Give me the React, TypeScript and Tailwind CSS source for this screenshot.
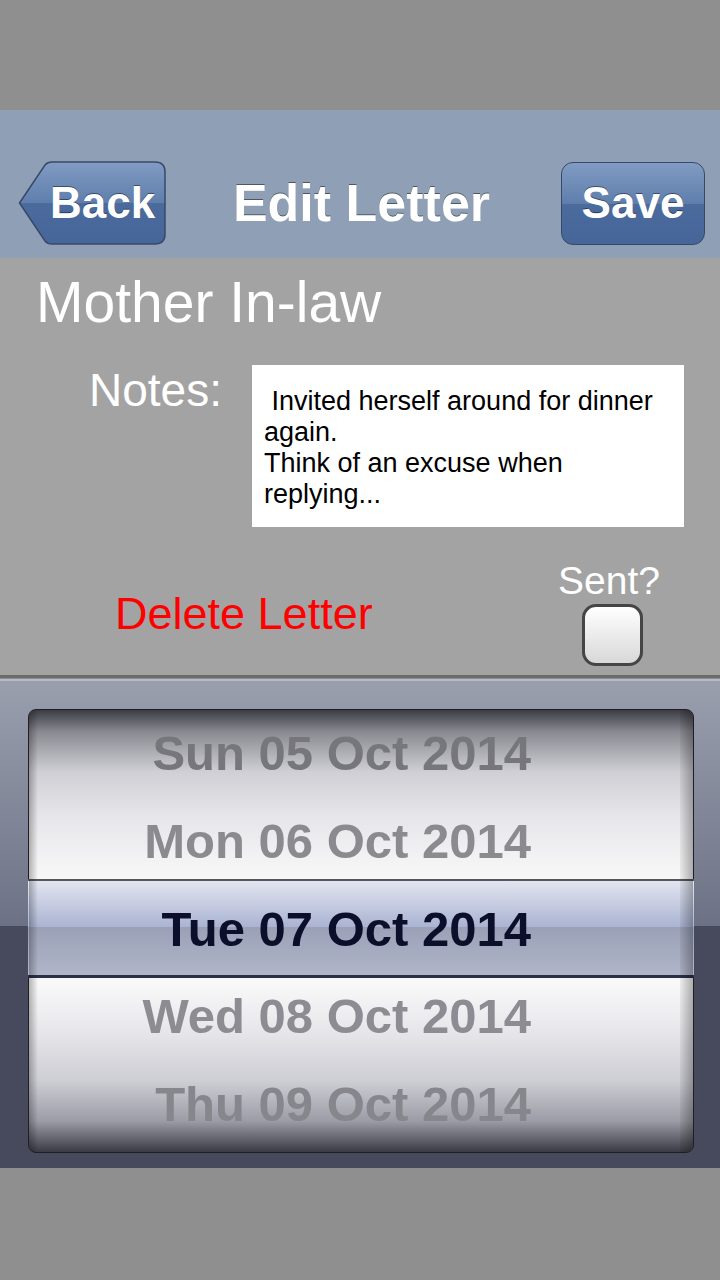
import React from "react";

const rows = [
  { label: "Sun 05 Oct 2014", color: "text-[#76767c]" },
  { label: "Mon 06 Oct 2014", color: "text-[#8a8a8f]" },
  { label: "Tue 07 Oct 2014", color: "text-[#0b0f2a]" },
  { label: "Wed 08 Oct 2014", color: "text-[#8c8c92]" },
  { label: "Thu 09 Oct 2014", color: "text-[#86868c]" },
];

const navText = "text-white font-bold [text-shadow:0_-1px_0_rgba(0,0,0,0.45)]";

const BackButton: React.FC = () => (
  <button className="relative w-[148px] h-[84px] flex items-center pl-[32px]">
    <svg className="absolute inset-0" width="148" height="84" viewBox="0 0 148 84">
      <defs>
        <linearGradient id="navBtn" x1="0" y1="0" x2="0" y2="1">
          <stop offset="0" stopColor="#819cc3" />
          <stop offset="0.5" stopColor="#5f7eac" />
          <stop offset="0.5" stopColor="#4b6b9d" />
          <stop offset="1" stopColor="#46669a" />
        </linearGradient>
      </defs>
      <path
        d="M1.5 42 L27 4 Q29.5 1 34 1 L137 1 Q147 1 147 11 L147 73 Q147 83 137 83 L34 83 Q29.5 83 27 80 Z"
        fill="url(#navBtn)"
        stroke="#374968"
        strokeWidth="1.5"
      />
    </svg>
    <span className={`relative text-[44px] leading-none ${navText}`}>Back</span>
  </button>
);

export default function App() {
  return (
    <div className="w-[720px] h-[1280px] flex flex-col font-['Liberation_Sans',Arial,sans-serif] bg-[#8f8f8f]">
      {/* status area */}
      <div className="h-[110px] shrink-0 bg-[#8f8f8f]" />

      {/* nav bar */}
      <div className="h-[148px] shrink-0 bg-[#8fa0b6] pl-[18px] pr-[15px] pt-[51px]">
        <div className="grid grid-cols-[1fr_auto_1fr] items-center">
          <div className="flex justify-start">
            <BackButton />
          </div>
          <h1 className={`text-[52px] leading-none ${navText}`}>Edit Letter</h1>
          <div className="flex justify-end">
            <button className="w-[144px] h-[83px] rounded-[12px] border-[1.5px] border-[#374968] bg-[linear-gradient(to_bottom,#819cc3_0%,#5f7eac_50%,#4b6b9d_50%,#46669a_100%)] flex items-center justify-center">
              <span className={`text-[44px] leading-none ${navText}`}>Save</span>
            </button>
          </div>
        </div>
      </div>

      {/* content */}
      <div className="h-[417px] shrink-0 bg-[#a3a3a3] flex flex-col">
        <h2 className="pl-[36px] pt-[16px] text-[57px] leading-none text-white">Mother In-law</h2>

        <div className="flex items-start mt-[34px] pl-[89px]">
          <span className="w-[163px] mt-[2px] text-[46px] leading-none text-white">Notes:</span>
          <div className="w-[432px] h-[162px] bg-white pl-[12px] pt-[21px] text-[27px] leading-[31px] text-black whitespace-pre">
            {" Invited herself around for dinner\nagain.\nThink of an excuse when\nreplying..."}
          </div>
        </div>

        <div className="flex items-start justify-between mt-[34px] pr-[58px]">
          <span className="ml-[115px] mt-[30px] text-[45px] leading-none text-[#ff0000]">Delete Letter</span>
          <div className="flex flex-col items-start w-[104px]">
            <span className="text-[39px] leading-none text-white">Sent?</span>
            <div className="ml-[24px] mt-[4px] w-[61px] h-[62px] rounded-[14px] border-[3px] border-[#454545] bg-[linear-gradient(to_bottom,#ffffff,#d8d8d8)]" />
          </div>
        </div>
      </div>

      {/* divider */}
      <div className="h-[3px] shrink-0 bg-[#6b6b6b]" />
      <div className="h-[1px] shrink-0 bg-[#8a8d98]" />
      <div className="h-[2px] shrink-0 bg-[#b7bbc6]" />

      {/* picker */}
      <div className="h-[487px] shrink-0 pt-[28px] pl-[28px] bg-[linear-gradient(to_bottom,#9a9fae_0px,#6c7185_245px,#474a5c_245px,#474a5c_100%)]">
        <div className="relative w-[666px] h-[444px] rounded-[8px] border border-[#1e1e24] bg-[linear-gradient(to_bottom,#3c3c44_0%,#8a8a92_5%,#cfcfd5_14%,#e6e6ea_24%,#f8f8f8_38%,#f8f8f8_62%,#e8e8ec_72%,#cdcdd4_84%,#9c9ca6_93%,#3a3a44_100%)]">
          {/* selection band */}
          <div className="absolute left-[-1px] right-[-1px] top-[169px] h-[99px] flex flex-col">
            <div className="h-[2px] bg-[#55575f]" />
            <div className="h-[46px] bg-[linear-gradient(to_bottom,#e2e5f0,#aab3d2)]" />
            <div className="flex-1 bg-[linear-gradient(to_bottom,#9aa1b7,#b0b5c8)]" />
            <div className="h-[3px] bg-[#28304a]" />
          </div>

          {/* side shading */}
          <div className="absolute left-0 top-0 bottom-0 w-[9px] rounded-l-[8px] bg-[linear-gradient(to_right,rgba(0,0,0,0.28),rgba(0,0,0,0))]" />
          <div className="absolute right-0 top-0 bottom-0 w-[13px] rounded-r-[8px] bg-[linear-gradient(to_left,rgba(0,0,0,0.3),rgba(0,0,0,0.05))]" />

          <div className="relative h-full flex flex-col justify-center pb-[4px]">
            {rows.map((r) => (
              <div
                key={r.label}
                className={`h-[89px] flex items-center justify-end pr-[162px] text-[49px] font-bold leading-none ${r.color}`}
              >
                {r.label}
              </div>
            ))}
          </div>
        </div>
      </div>

      <div className="flex-1 bg-[#8f8f8f]" />
    </div>
  );
}
